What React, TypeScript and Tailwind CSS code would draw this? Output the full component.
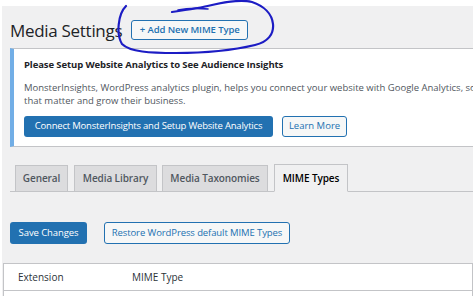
import React from "react";

const tabs = [
  { label: "General", w: "w-[53px]", ml: "ml-[5px]" },
  { label: "Media Library", w: "w-[83px]", ml: "ml-[6px]" },
  { label: "Media Taxonomies", w: "w-[106px]", ml: "ml-[5px]" },
];

function Scribble() {
  return (
    <svg className="absolute left-0 top-0 pointer-events-none" width="474" height="60" viewBox="0 0 474 60" fill="none">
      <path
        d="M126 6 C118 14 116 34 122 44 C130 52 150 53 176 53 C205 53 234 50 255 45 C268 42 274 34 273 24 C272 14 264 6 252 2 C240 -1 225 2 212 5 C200 8 186 10 172 12"
        stroke="#1c1cc4"
        strokeWidth="2.2"
        strokeLinecap="round"
      />
      <path d="M178 10 C188 8 198 8 208 9" stroke="#1c1cc4" strokeWidth="1.6" strokeLinecap="round" />
    </svg>
  );
}

export default function App() {
  return (
    <div className="relative w-[474px] h-[296px] overflow-hidden bg-white pt-[6px] pl-[2px] pr-[1px] font-['Open_Sans',sans-serif]">
      <div className="h-full bg-[#f0f0f1] overflow-hidden">
        {/* page header */}
        <div className="mt-[14px] pl-[8px] flex items-center h-[20px]">
          <h1 className="text-[17px] leading-none tracking-[-0.3px] text-[#1d2327] whitespace-nowrap">Media Settings</h1>
          <button className="ml-[9px] h-[20px] w-[117px] shrink-0 border border-[#2271b1] bg-[#f6f7f7] rounded-[3px] text-[#2271b1] text-[9.5px] font-semibold tracking-[-0.1px] whitespace-nowrap">
            + Add New MIME Type
          </button>
        </div>

        {/* analytics notice */}
        <div className="mt-[8px] ml-[8px] w-[600px] h-[99px] bg-white border border-[#c3c4c7] border-l-4 border-l-[#72aee6] pl-[10px] pt-[8px]">
          <div className="h-[15px] leading-[15px] text-[9.5px] font-bold tracking-[-0.1px] text-[#1d2327] whitespace-nowrap">
            Please Setup Website Analytics to See Audience Insights
          </div>
          <div className="mt-[9px] text-[9.5px] leading-[13px] text-[#50575e] whitespace-nowrap">
            <div>MonsterInsights, WordPress analytics plugin, helps you connect your website with Google Analytics, so you can see the stats</div>
            <div>that matter and grow their business.</div>
          </div>
          <div className="mt-[9px] flex gap-[9px]">
            <button className="h-[21px] w-[249px] rounded-[3px] bg-[#2271b1] text-white text-[9.5px] font-medium tracking-[-0.2px] whitespace-nowrap">
              Connect MonsterInsights and Setup Website Analytics
            </button>
            <button className="h-[21px] w-[65px] rounded-[3px] border border-[#2271b1] bg-[#f6f7f7] text-[#2271b1] text-[9.5px] whitespace-nowrap">
              Learn More
            </button>
          </div>
        </div>

        {/* tabs */}
        <nav className="mt-[17px] ml-[8px] flex items-end h-[28px] border-b border-[#c3c4c7]">
          {tabs.map((t) => (
            <div
              key={t.label}
              className={`${t.w} ${t.ml} h-[27px] -mb-px flex items-center justify-center border border-[#c3c4c7] bg-[#dcdcde] text-[10px] font-semibold tracking-[-0.1px] text-[#50575e] whitespace-nowrap`}
            >
              {t.label}
            </div>
          ))}
          <div className="w-[74px] ml-[6px] h-[28px] -mb-px flex items-center justify-center border border-[#c3c4c7] border-b-[#f0f0f1] bg-[#f0f0f1] text-[10px] font-semibold tracking-[-0.1px] text-black whitespace-nowrap">
            MIME Types
          </div>
        </nav>

        {/* actions */}
        <div className="mt-[30px] ml-[8px] flex gap-[17px]">
          <button className="h-[22px] w-[77px] rounded-[3px] bg-[#2271b1] text-white text-[9.5px] tracking-[-0.1px] whitespace-nowrap">
            Save Changes
          </button>
          <button className="h-[22px] w-[186px] rounded-[3px] border border-[#2271b1] bg-[#f6f7f7] text-[#2271b1] text-[9.5px] tracking-[-0.1px] whitespace-nowrap">
            Restore WordPress default MIME Types
          </button>
        </div>

        {/* mime table */}
        <div className="mt-[19px] ml-[1px] h-[60px] bg-white border border-[#c3c4c7]">
          <div className="flex items-center h-[27px] border-b border-[#c3c4c7] pl-[14px] text-[10px] text-[#2c3338]">
            <div className="w-[114px]">Extension</div>
            <div>MIME Type</div>
          </div>
        </div>
      </div>
      <Scribble />
    </div>
  );
}
